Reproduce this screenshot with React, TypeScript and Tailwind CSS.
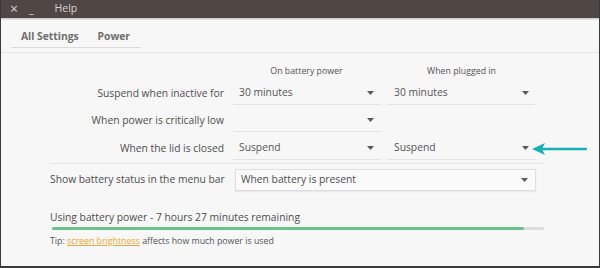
import React from "react";

const font = { fontFamily: '"Open Sans", "Noto Sans", sans-serif' };

function Caret() {
    return (
        <svg width="7" height="4" viewBox="0 0 7 4" className="shrink-0">
            <path d="M0 0 L7 0 L3.5 4 Z" fill="#5a5a5a" />
        </svg>
    );
}

function Combo({ value }: { value?: string }) {
    return (
        <div className="w-[147px] h-[23px] flex items-center justify-between pl-[6px] pr-[6px] border-b border-[#e2e2e2]">
            <span className="text-[10.3px] text-[#555]">{value ?? ""}</span>
            <Caret />
        </div>
    );
}

export default function App() {
    return (
        <div
            className="w-[600px] h-[268px] bg-[#f7f7f7] border-x-[1.5px] border-b-2 border-[#3a3a3a] flex flex-col overflow-hidden"
            style={font}
        >
            {/* タイトルバー */}
            <div className="h-[18px] bg-[#4f4744] flex items-center text-[#d8d4d0] text-[10.5px] shadow-[0_1px_2px_rgba(0,0,0,0.25)]">
                <span className="ml-[9px] text-[14px] leading-none">×</span>
                <span className="ml-[11px] text-[11px] leading-none -mt-[2px] font-bold">_</span>
                <span className="ml-[21px] font-medium">Help</span>
            </div>

            {/* ヘッダー */}
            <div className="h-[35px] border-b border-[#e6e6e6] px-[10px]">
                <div className="w-[130px] h-[30px] flex items-end pb-[3px] border-b border-[#dcdcdc] text-[10.3px] font-bold text-[#6e6e6e]">
                    <span className="ml-[10px]">All Settings</span>
                    <span className="ml-[19px]">Power</span>
                </div>
            </div>

            {/* 設定 */}
            <div className="relative flex flex-col">
                <div className="flex mt-[13px] text-[8.8px] text-[#555] h-[12px] items-center">
                    <div className="w-[232px]" />
                    <div className="w-[147px] text-center">On battery power</div>
                    <div className="w-[8px]" />
                    <div className="w-[147px] text-center">When plugged in</div>
                </div>

                <div className="flex items-end mt-[4px]">
                    <div className="w-[223px] h-[23px] flex items-center justify-end text-[10.3px] text-[#4d4d4d]">
                        Suspend when inactive for
                    </div>
                    <div className="w-[9px]" />
                    <Combo value="30 minutes" />
                    <div className="w-[8px]" />
                    <Combo value="30 minutes" />
                </div>

                <div className="flex items-end mt-[4px]">
                    <div className="w-[223px] h-[23px] flex items-center justify-end text-[10.3px] text-[#4d4d4d]">
                        When power is critically low
                    </div>
                    <div className="w-[9px]" />
                    <Combo />
                </div>

                <div className="flex items-end mt-[5px]">
                    <div className="w-[223px] h-[23px] flex items-center justify-end text-[10.3px] text-[#4d4d4d]">
                        When the lid is closed
                    </div>
                    <div className="w-[9px]" />
                    <Combo value="Suspend" />
                    <div className="w-[8px]" />
                    <Combo value="Suspend" />
                </div>

                {/* 矢印 */}
                <svg
                    width="56"
                    height="14"
                    viewBox="0 0 56 14"
                    className="absolute left-[530px] top-[89px]"
                >
                    <path d="M12 7 L55 7" stroke="#17b0b4" strokeWidth="2.5" strokeLinecap="round" />
                    <path d="M1 7 L14 1 L11 7 L14 13 Z" fill="#17b0b4" />
                </svg>

                <div className="ml-[49px] w-[494px] border-b border-[#e6e6e6] mt-[3px]" />

                <div className="flex items-center mt-[5px] ml-[49px]">
                    <div className="w-[185px] whitespace-nowrap text-[10.3px] text-[#4d4d4d]">
                        Show battery status in the menu bar
                    </div>
                    <div className="w-[301px] h-[22px] flex items-center justify-between pl-[5px] pr-[7px] bg-[#fafafa] border border-[#dedede] shadow-[0_1px_1px_rgba(0,0,0,0.06)]">
                        <span className="text-[10.3px] font-medium text-[#4d4d4d]">
                            When battery is present
                        </span>
                        <Caret />
                    </div>
                </div>

                <div className="ml-[49px] mt-[19px] text-[10.3px] text-[#4d4d4d] leading-[14px]">
                    Using battery power - 7 hours 27 minutes remaining
                </div>
                <div className="ml-[51px] mt-[3px] w-[492px] h-[3px] bg-[#dcdcdc] rounded-full">
                    <div className="w-[472px] h-[3px] bg-[#6cc28d] rounded-full" />
                </div>

                <div className="ml-[49px] mt-[5px] text-[8.8px] text-[#555] leading-[12px]">
                    Tip: <span className="text-[#f0a630] underline">screen brightness</span>{" "}
                    affects how much power is used
                </div>
            </div>
        </div>
    );
}
